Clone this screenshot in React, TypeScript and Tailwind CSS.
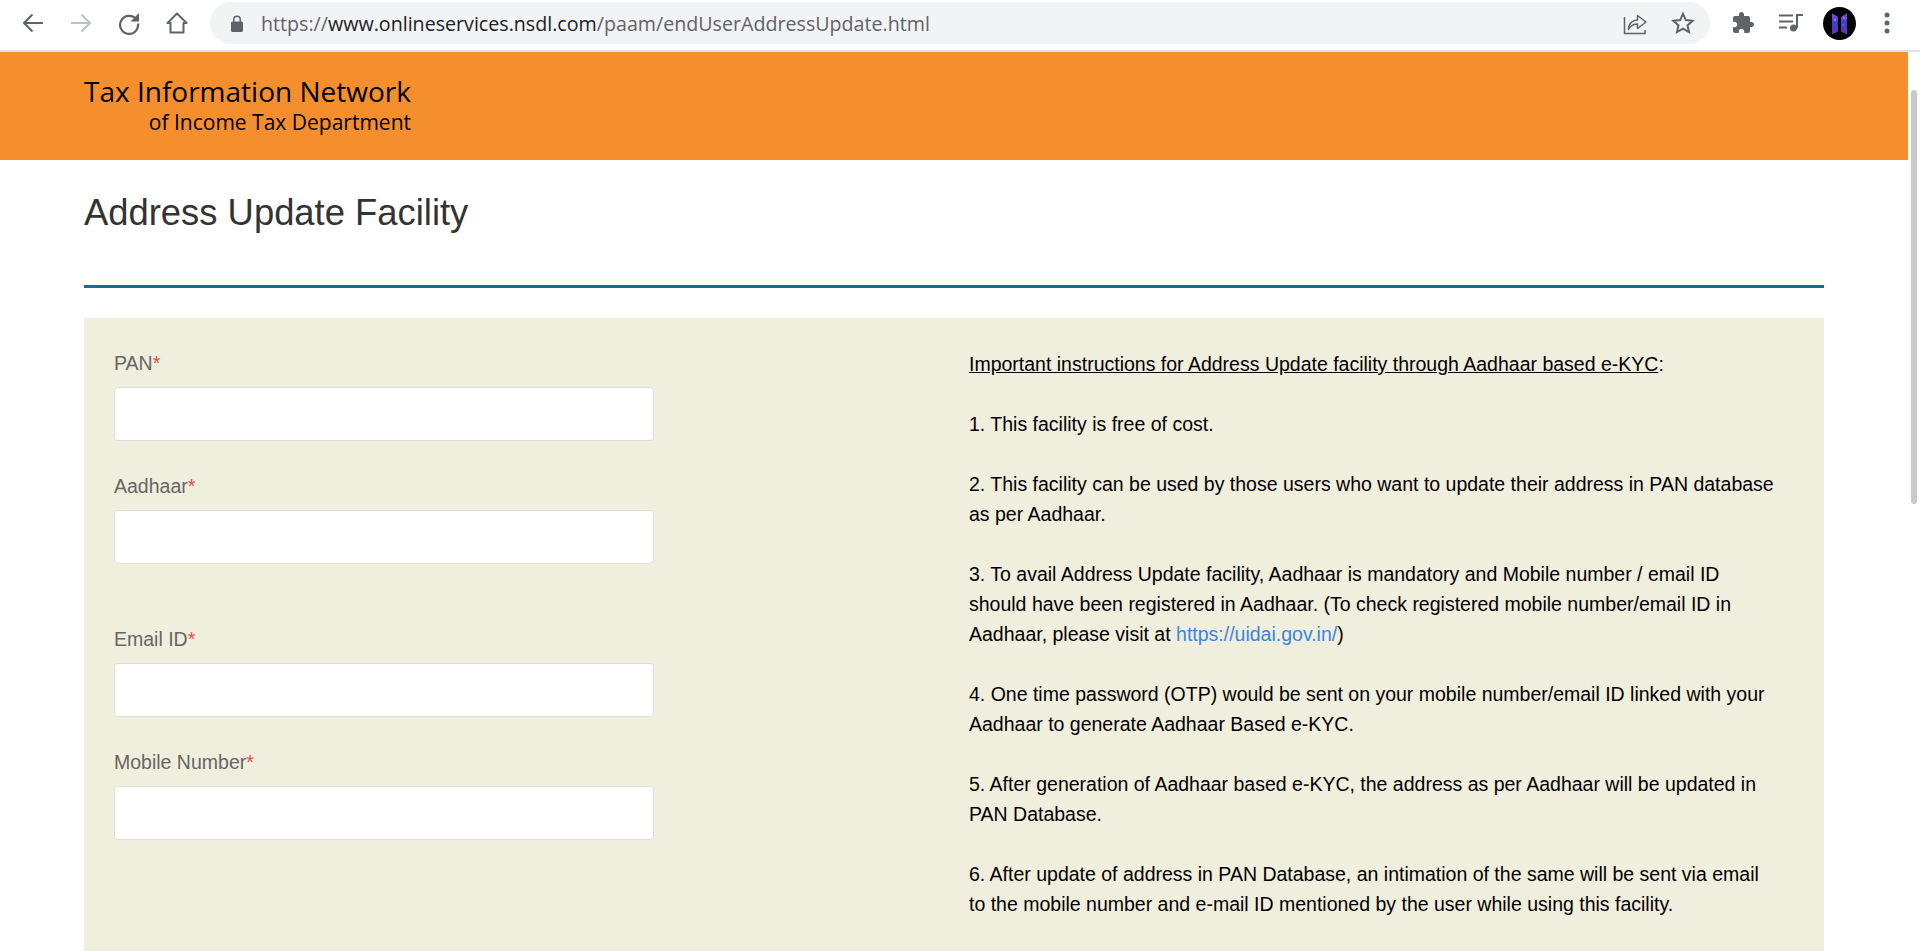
import React from 'react'

const FONT_ARIAL = "font-['Liberation_Sans',Arial,sans-serif]"

function ToolbarIcon({ children }: { children: React.ReactNode }) {
    return <div className="w-[48px] h-[46px] flex items-center justify-center shrink-0">{children}</div>
}

function BrowserBar() {
    return (
        <div className="h-[52px] shrink-0 bg-white border-b-2 border-[#dee1e6] flex items-start pl-[9px] pr-[9px]">
            <ToolbarIcon>
                <svg width="24" height="24" viewBox="0 0 24 24" fill="none" stroke="#5f6368" strokeWidth="2">
                    <path d="M22 12H3M11.5 3.5L3 12l8.500 8.500" />
                </svg>
            </ToolbarIcon>
            <ToolbarIcon>
                <svg width="24" height="24" viewBox="0 0 24 24" fill="none" stroke="#bdc1c6" strokeWidth="2">
                    <path d="M2 12h19M12.500 3.500L21 12l-8.500 8.500" />
                </svg>
            </ToolbarIcon>
            <ToolbarIcon>
                <svg width="24" height="24" viewBox="0 0 24 24" fill="none">
                    <path d="M19.300 8.500A9 9 0 1 0 21 12.500" stroke="#5f6368" strokeWidth="2.200" />
                    <path d="M22 2v8.500h-8.500z" fill="#5f6368" />
                </svg>
            </ToolbarIcon>
            <ToolbarIcon>
                <svg width="24" height="24" viewBox="0 0 24 24" fill="none" stroke="#5f6368" strokeWidth="2">
                    <path d="M2.500 12L12 2.500 21.500 12h-3v9.500h-13V12z" strokeLinejoin="round" />
                </svg>
            </ToolbarIcon>

            <div className="ml-[9px] mt-[2px] h-[42px] flex-1 rounded-full bg-[#f1f3f4] flex items-center pl-[21px] pr-[3px]">
                <svg width="12" height="17" viewBox="0 0 12 17" fill="#5f6368" className="shrink-0">
                    <path d="M2 6.500V4.500a4 4 0 0 1 8 0v2h.500A1.500 1.500 0 0 1 12 8v7.500A1.500 1.500 0 0 1 10.500 17h-9A1.500 1.500 0 0 1 0 15.500V8a1.500 1.500 0 0 1 1.500-1.500zm1.500 0h5V4.500a2.500 2.500 0 0 0-5 0z" />
                </svg>
                <div className="ml-[18px] pt-[1px] flex-1 font-['Open_Sans',sans-serif] text-[19.650px] leading-[41px] text-[#5f6368] whitespace-nowrap">
                    https://<span className="text-[#202124]">www.onlineservices.nsdl.com</span>/paam/endUserAddressUpdate.html
                </div>
                <ToolbarIcon>
                    <svg width="24" height="24" viewBox="0 0 24 24" fill="none" stroke="#5f6368" strokeWidth="1.500">
                        <path d="M1.500 6v16.500h20.500V19" />
                        <path d="M5.500 18.500c0-6 4-9.500 9-9.500V4.500L23 11l-8.500 6.500v-4.500c-4 0-7 1.500-9 5.500z" strokeLinejoin="round" />
                    </svg>
                </ToolbarIcon>
                <ToolbarIcon>
                    <svg width="24" height="24" viewBox="0 0 24 24" fill="none" stroke="#5f6368" strokeWidth="2">
                        <path d="M12 2.800l2.800 6.300 6.800.700-5.100 4.600 1.500 6.700-6-3.500-6 3.500 1.500-6.700-5.100-4.600 6.800-.700z" />
                    </svg>
                </ToolbarIcon>
            </div>

            <div className="ml-[9px] flex">
                <ToolbarIcon>
                    <svg width="24" height="24" viewBox="0 0 24 24" fill="#5f6368">
                        <path d="M20.500 11H19V7c0-1.100-.9-2-2-2h-4V3.500C13 2.120 11.880 1 10.500 1S8 2.120 8 3.500V5H4c-1.100 0-1.990.9-1.990 2v3.800H3.500c1.490 0 2.700 1.210 2.700 2.700s-1.210 2.700-2.700 2.700H2V20c0 1.100.9 2 2 2h3.800v-1.500c0-1.490 1.210-2.700 2.700-2.700 1.490 0 2.700 1.210 2.700 2.700V22H17c1.100 0 2-.9 2-2v-4h1.500c1.380 0 2.500-1.120 2.500-2.500S21.880 11 20.500 11z" />
                    </svg>
                </ToolbarIcon>
                <ToolbarIcon>
                    <svg width="24" height="18" viewBox="0 0 24 18" fill="none" stroke="#5f6368" strokeWidth="2">
                        <path d="M0 1.500h14M0 7.500h14M0 13.500h8" />
                        <path d="M18 14V1h6" />
                        <circle cx="14.500" cy="14" r="3.500" fill="#5f6368" stroke="none" />
                    </svg>
                </ToolbarIcon>
                <ToolbarIcon>
                    <svg width="33" height="33" viewBox="0 0 33 33">
                        <defs>
                            <linearGradient id="galaxy" x1="0" y1="0" x2="0" y2="1">
                                <stop offset="0" stopColor="#8a4fd8" />
                                <stop offset="0.45" stopColor="#3a3fc8" />
                                <stop offset="1" stopColor="#7a2ca8" />
                            </linearGradient>
                        </defs>
                        <circle cx="16.500" cy="16.500" r="16.500" fill="#000" />
                        <path d="M9 6.500l6 3.500v14.500l-6 3z" fill="url(#galaxy)" />
                        <path d="M24 6.500l-6 3.500v14.500l6 3z" fill="url(#galaxy)" />
                        <circle cx="12" cy="13" r="0.700" fill="#e0d0ff" />
                        <circle cx="21" cy="11" r="0.700" fill="#e0d0ff" />
                        <circle cx="20" cy="18" r="0.600" fill="#9fd0ff" />
                    </svg>
                </ToolbarIcon>
                <ToolbarIcon>
                    <svg width="6" height="22" viewBox="0 0 6 22" fill="#5f6368">
                        <circle cx="3" cy="3" r="2.500" />
                        <circle cx="3" cy="11" r="2.500" />
                        <circle cx="3" cy="19" r="2.500" />
                    </svg>
                </ToolbarIcon>
            </div>
        </div>
    )
}

function Field({ label, className = '' }: { label: string; className?: string }) {
    return (
        <div className={className}>
            <label className="block pt-[1px] text-[19.500px] leading-[30px] text-[#666] mb-[9px]">
                {label}
                <span className="text-[#e74c3c]">*</span>
            </label>
            <input className="block w-full h-[54px] bg-white border border-[#dedede] rounded-[4px]" />
        </div>
    )
}

export default function App() {
    return (
        <div className={`h-[951px] overflow-hidden flex flex-col bg-white ${FONT_ARIAL}`}>
            <BrowserBar />
            <div className="flex-1 flex min-h-0">
                <main className="flex-1 min-w-0 overflow-hidden">
                    {/* Header */}
                    <header className="h-[108px] bg-[#f58f2e] pl-[84px] pt-[21px]">
                        <div className="w-[327px] text-right text-black font-['Open_Sans',sans-serif]">
                            <div className="text-[28px] leading-[37px] text-left">Tax Information Network</div>
                            <div className="text-[21px] leading-[25px]">of Income Tax Department</div>
                        </div>
                    </header>

                    <div className="ml-[84px] w-[1740px]">
                        <h1 className="h-[128px] pt-[30px] border-b-[3px] border-[#00788f] text-[36.400px] leading-[46px] text-[#333]">
                            Address Update Facility
                        </h1>

                        {/* Form panel */}
                        <section className="mt-[30px] min-h-[700px] bg-[#f0eedd] pl-[30px] pt-[29px] flex">
                            <div className="w-[540px] shrink-0">
                                <Field label="PAN" />
                                <Field label="Aadhaar" className="mt-[29px]" />
                                <Field label="Email ID" className="mt-[59px]" />
                                <Field label="Mobile Number" className="mt-[29px]" />
                            </div>

                            <div className="ml-[315px] w-[806px] pt-[2px] text-[19.500px] leading-[30px] text-black space-y-[30px]">
                                <p>
                                    <span className="underline">Important instructions for Address Update facility through Aadhaar based e-KYC</span>:
                                </p>
                                <p>1. This facility is free of cost.</p>
                                <p>2. This facility can be used by those users who want to update their address in PAN database as per Aadhaar.</p>
                                <p>
                                    3. To avail Address Update facility, Aadhaar is mandatory and Mobile number / email ID should have been registered in Aadhaar. (To check registered mobile number/email ID in Aadhaar, please visit at{' '}
                                    <a className="text-[#3a86e0]">https://uidai.gov.in/</a>)
                                </p>
                                <p>4. One time password (OTP) would be sent on your mobile number/email ID linked with your Aadhaar to generate Aadhaar Based e-KYC.</p>
                                <p>5. After generation of Aadhaar based e-KYC, the address as per Aadhaar will be updated in PAN Database.</p>
                                <p>6. After update of address in PAN Database, an intimation of the same will be sent via email to the mobile number and e-mail ID mentioned by the user while using this facility.</p>
                            </div>
                        </section>
                    </div>
                </main>

                {/* Scrollbar */}
                <div className="w-[12px] shrink-0 bg-white pl-[3px] pt-[38px]">
                    <div className="w-[6px] h-[414px] rounded-[3px] bg-[#c9c9c9]" />
                </div>
            </div>
        </div>
    )
}
